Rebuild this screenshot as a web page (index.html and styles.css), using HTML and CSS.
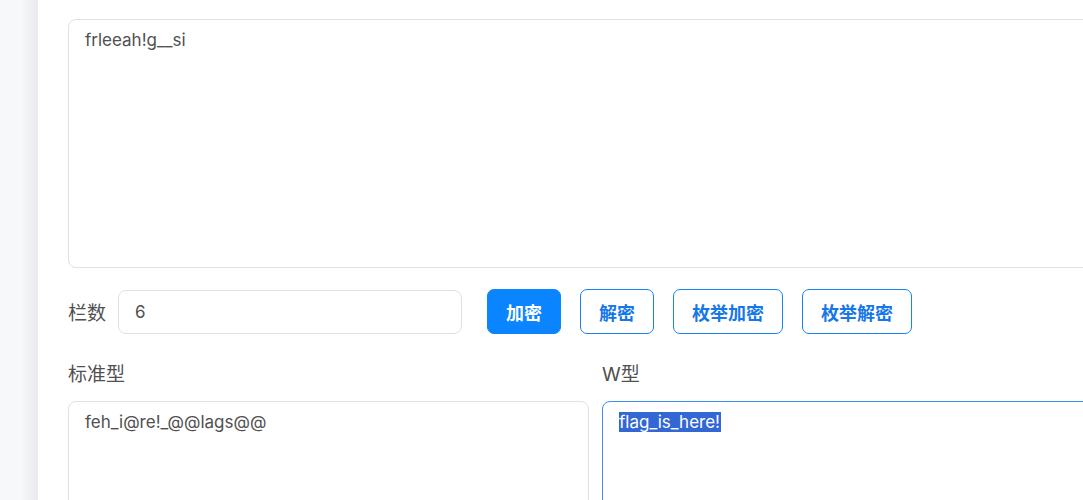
FILE: index.html
```html
<!DOCTYPE html>
<html lang="zh-CN">
<head>
    <meta charset="utf-8"/>
    <title>栅栏密码</title>
    <link rel="stylesheet" href="styles.css">
</head>
<body>
    <div class="sidebar"></div>

    <div class="main">
        <textarea class="box source" spellcheck="false">frleeah!g__si</textarea>

        <div class="controls">
            <label class="fieldLabel" for="rails">栏数</label>
            <input id="rails" class="railsInput" type="text" value="6"/>
            <button class="btn primary">加密</button>
            <button class="btn">解密</button>
            <button class="btn">枚举加密</button>
            <button class="btn">枚举解密</button>
        </div>

        <div class="results">
            <div class="result">
                <h3>标准型</h3>
                <textarea class="box output" spellcheck="false">feh_i@re!_@@lags@@</textarea>
            </div>
            <div class="result">
                <h3>W型</h3>
                <div class="box output focused"><span class="selected">flag_is_here!</span></div>
            </div>
        </div>
    </div>
</body>
</html>
```

FILE: styles.css
```css
*{
    margin: 0;
    padding: 0;
    box-sizing: border-box;
}
body{
    display: flex;
    height: 100vh;
    overflow: hidden;
    background: white;
    color: #505050;
    font-family: Inter, "Noto Sans CJK SC", sans-serif;
}
.sidebar{
    flex: 0 0 38px;
    background: linear-gradient(to right, #f7f8fa 55%, #e9eaed);
}
.main{
    flex-shrink: 0;
    width: 1085px;
    padding: 19px 0 0 30px;
}
.box{
    display: block;
    width: 100%;
    border: 1px solid #dfe1e5;
    border-radius: 8px;
    padding: 7px 16px;
    font-family: Inter, "Noto Sans CJK SC", sans-serif;
    font-size: 17px;
    line-height: 26px;
    color: #505050;
    background: white;
    resize: none;
    outline: none;
}
.source{
    height: 249px;
}
.controls{
    display: flex;
    align-items: center;
    margin-top: 21px;
    height: 45px;
}
.fieldLabel{
    font-size: 19px;
    margin-right: 12px;
}
.railsInput{
    width: 344px;
    height: 44px;
    border: 1px solid #dfe1e5;
    border-radius: 8px;
    padding: 0 16px;
    font-family: Inter, sans-serif;
    font-size: 17px;
    color: #505050;
    outline: none;
    margin-right: 25px;
}
.btn{
    height: 45px;
    padding: 0 18px;
    margin-right: 19px;
    border: 1px solid #1a84f5;
    border-radius: 7px;
    background: white;
    color: #1577e8;
    font-family: "Noto Sans CJK SC", sans-serif;
    font-size: 18px;
    font-weight: bold;
    cursor: pointer;
}
.btn.primary{
    background: #0a84ff;
    border-color: #0a84ff;
    color: white;
}
.results{
    display: grid;
    grid-template-columns: 521px 521px;
    gap: 13px;
    margin-top: 28px;
}
.result h3{
    font-size: 19px;
    font-weight: normal;
    line-height: 26px;
    margin-bottom: 13px;
}
.output{
    height: 200px;
}
.focused{
    border-color: #3d8ff0;
}
.selected{
    background: #3367d3;
    color: white;
    padding-right: 1px;
}
```
